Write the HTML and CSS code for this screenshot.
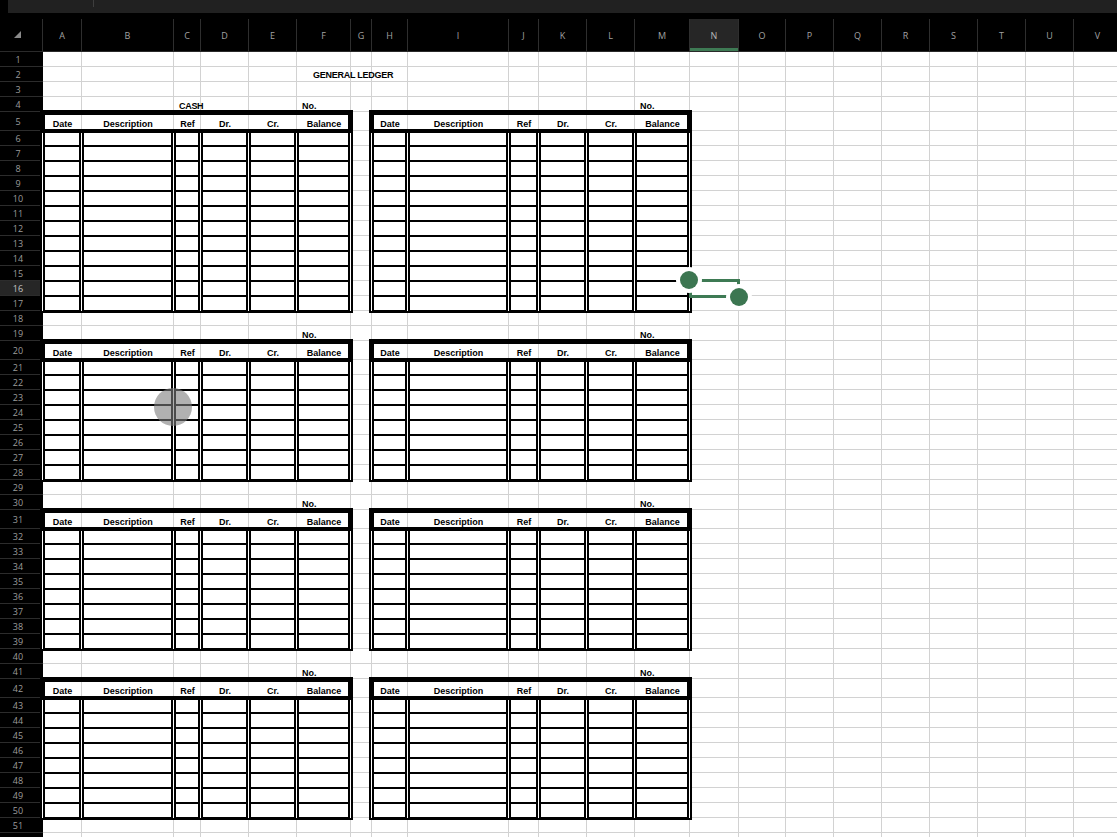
FILE: index.html
```html
<!DOCTYPE html>
<html>
<head>
<meta charset="utf-8">
<title>General Ledger</title>
<link rel="stylesheet" href="styles.css">
</head>
<body>
<div class="app">
  <div class="topbar"><div class="tb-left"></div><div class="tb-main"><span class="tb-div"></span></div></div>
  <div class="sheet">
    <div class="corner"><svg width="7" height="7" viewBox="0 0 7 7"><polygon points="7,0 7,7 0,7" fill="#8a8a8a"/></svg></div>
    <div class="colheads">
      <div class="ch">A</div><div class="ch">B</div><div class="ch">C</div><div class="ch">D</div><div class="ch">E</div><div class="ch">F</div><div class="ch">G</div><div class="ch">H</div><div class="ch">I</div><div class="ch">J</div><div class="ch">K</div><div class="ch">L</div><div class="ch">M</div><div class="ch on">N</div><div class="ch">O</div><div class="ch">P</div><div class="ch">Q</div><div class="ch">R</div><div class="ch">S</div><div class="ch">T</div><div class="ch">U</div><div class="ch">V</div>
    </div>
    <div class="rowheads">
      <div class="rh">1</div><div class="rh">2</div><div class="rh">3</div><div class="rh">4</div><div class="rh">5</div><div class="rh">6</div><div class="rh">7</div><div class="rh">8</div><div class="rh">9</div><div class="rh">10</div>
      <div class="rh">11</div><div class="rh">12</div><div class="rh">13</div><div class="rh">14</div><div class="rh">15</div><div class="rh on">16</div><div class="rh">17</div><div class="rh">18</div><div class="rh">19</div><div class="rh">20</div>
      <div class="rh">21</div><div class="rh">22</div><div class="rh">23</div><div class="rh">24</div><div class="rh">25</div><div class="rh">26</div><div class="rh">27</div><div class="rh">28</div><div class="rh">29</div><div class="rh">30</div>
      <div class="rh">31</div><div class="rh">32</div><div class="rh">33</div><div class="rh">34</div><div class="rh">35</div><div class="rh">36</div><div class="rh">37</div><div class="rh">38</div><div class="rh">39</div><div class="rh">40</div>
      <div class="rh">41</div><div class="rh">42</div><div class="rh">43</div><div class="rh">44</div><div class="rh">45</div><div class="rh">46</div><div class="rh">47</div><div class="rh">48</div><div class="rh">49</div><div class="rh">50</div>
      <div class="rh">51</div><div class="rh"></div>
    </div>
    <div class="vlines"><i></i><i></i><i></i><i></i><i></i><i></i><i></i><i></i><i></i><i></i><i></i><i></i><i></i><i></i><i></i><i></i><i></i><i></i><i></i><i></i><i></i><i></i></div>
    <div class="hlines">
      <i></i><i></i><i></i><i></i><i></i><i></i><i></i><i></i><i></i><i></i><i></i><i></i><i></i>
      <i></i><i></i><i></i><i></i><i></i><i></i><i></i><i></i><i></i><i></i><i></i><i></i><i></i>
      <i></i><i></i><i></i><i></i><i></i><i></i><i></i><i></i><i></i><i></i><i></i><i></i><i></i>
      <i></i><i></i><i></i><i></i><i></i><i></i><i></i><i></i><i></i><i></i><i></i><i></i><i></i>
    </div>

    <div class="lbl title">GENERAL LEDGER</div>
    <div class="lbl cash">CASH</div>
    <div class="lbl no colF row4">No.</div>
    <div class="lbl no colM row4">No.</div>
    <div class="lbl no colF row19">No.</div>
    <div class="lbl no colM row19">No.</div>
    <div class="lbl no colF row30">No.</div>
    <div class="lbl no colM row30">No.</div>
    <div class="lbl no colF row41">No.</div>
    <div class="lbl no colM row41">No.</div>

    <div class="ledger left band1">
      <div class="lh"><div class="lh-g"><span>Date</span><span>Description</span><span>Ref</span><span>Dr.</span><span>Cr.</span><span>Balance</span></div></div>
      <div class="lb"><i></i><i></i><i></i><i></i><i></i><i></i></div>
    </div>
    <div class="ledger right band1">
      <div class="lh"><div class="lh-g"><span>Date</span><span>Description</span><span>Ref</span><span>Dr.</span><span>Cr.</span><span>Balance</span></div></div>
      <div class="lb"><i></i><i></i><i></i><i></i><i></i><i></i></div>
    </div>
    <div class="ledger left band2">
      <div class="lh"><div class="lh-g"><span>Date</span><span>Description</span><span>Ref</span><span>Dr.</span><span>Cr.</span><span>Balance</span></div></div>
      <div class="lb"><i></i><i></i><i></i><i></i><i></i><i></i></div>
    </div>
    <div class="ledger right band2">
      <div class="lh"><div class="lh-g"><span>Date</span><span>Description</span><span>Ref</span><span>Dr.</span><span>Cr.</span><span>Balance</span></div></div>
      <div class="lb"><i></i><i></i><i></i><i></i><i></i><i></i></div>
    </div>
    <div class="ledger left band3">
      <div class="lh"><div class="lh-g"><span>Date</span><span>Description</span><span>Ref</span><span>Dr.</span><span>Cr.</span><span>Balance</span></div></div>
      <div class="lb"><i></i><i></i><i></i><i></i><i></i><i></i></div>
    </div>
    <div class="ledger right band3">
      <div class="lh"><div class="lh-g"><span>Date</span><span>Description</span><span>Ref</span><span>Dr.</span><span>Cr.</span><span>Balance</span></div></div>
      <div class="lb"><i></i><i></i><i></i><i></i><i></i><i></i></div>
    </div>
    <div class="ledger left band4">
      <div class="lh"><div class="lh-g"><span>Date</span><span>Description</span><span>Ref</span><span>Dr.</span><span>Cr.</span><span>Balance</span></div></div>
      <div class="lb"><i></i><i></i><i></i><i></i><i></i><i></i></div>
    </div>
    <div class="ledger right band4">
      <div class="lh"><div class="lh-g"><span>Date</span><span>Description</span><span>Ref</span><span>Dr.</span><span>Cr.</span><span>Balance</span></div></div>
      <div class="lb"><i></i><i></i><i></i><i></i><i></i><i></i></div>
    </div>

    <div class="selbox"></div>
  </div>
  <div class="touch"></div>
</div>
</body>
</html>
```

FILE: styles.css
```css
* { box-sizing: border-box; margin: 0; padding: 0; }
html, body { width: 1117px; height: 837px; overflow: hidden; background: #000; }

.app {
  position: relative;
  width: 1117px;
  height: 837px;
  overflow: hidden;
  background: #000;
  font-family: "Liberation Sans", Arial, sans-serif;
}

/* top strip */
.topbar { height: 13px; display: flex; margin-bottom: 6px; }
.tb-left { width: 8px; background: #000; }
.tb-main { flex: 1; background: #212121; padding-left: 85px; }
.tb-div { display: block; width: 1px; height: 7px; background: #3e3e3e; }

/* sheet grid */
.sheet {
  --cols: 39px 92px 27px 48px 48px 54px 21px 36px 101px 30px 48px 48px 55px 49px 47px 48px 48px 48px 48px 48px 48px 48px;
  --rows: repeat(4, 15px) 19px repeat(14, 15px) 19px repeat(10, 15px) 19px repeat(10, 15px) 19px repeat(10, 15px);
  position: relative;
  display: grid;
  grid-template-columns: 43px var(--cols);
  grid-template-rows: 33px var(--rows);
}

.corner {
  grid-column: 1;
  grid-row: 1;
  border-right: 1px solid #2e2e2e;
  border-bottom: 1px solid #2a2a2a;
  padding: 12px 0 0 14px;
}
.corner svg { display: block; }

.colheads {
  grid-column: 2 / -1;
  grid-row: 1;
  display: grid;
  grid-template-columns: var(--cols);
  border-bottom: 1px solid #2a2a2a;
}
.ch {
  border-right: 1px solid #2e2e2e;
  color: #a2a2a2;
  font-family: "Open Sans", "Noto Sans", sans-serif;
  font-size: 9px;
  display: flex;
  align-items: center;
  justify-content: center;
  padding-top: 1px;
}
.ch.on {
  background: #262626;
  box-shadow: inset 0 -3px 0 #3e7a54;
  color: #b5b5b5;
}

.rowheads {
  grid-column: 1;
  grid-row: 2 / -1;
  display: grid;
  grid-template-rows: var(--rows);
}
.rh {
  border-bottom: 1px solid #2c2c2c;
  color: #9c9c9c;
  font-family: "Open Sans", "Noto Sans", sans-serif;
  font-size: 9px;
  display: flex;
  align-items: center;
  justify-content: center;
  padding-right: 7px;
}
.rh.on {
  background: #262626;
  color: #c4c4c4;
  box-shadow: inset -3px 0 0 #3e7a54;
}

.vlines {
  grid-column: 2 / -1;
  grid-row: 2 / -1;
  display: grid;
  grid-template-columns: var(--cols);
  background: #fff;
}
.vlines i { display: block; border-right: 1px solid #d2d2d2; }

.hlines {
  grid-column: 2 / -1;
  grid-row: 2 / -1;
  display: grid;
  grid-template-rows: var(--rows);
}
.hlines i { display: block; border-bottom: 1px solid #d2d2d2; }

/* text labels in cells */
.lbl {
  display: flex;
  align-items: flex-end;
  white-space: nowrap;
  font-size: 9px;
  line-height: 9px;
  font-weight: bold;
  color: #000;
  padding-bottom: 1px;
}
.title { grid-column: 7 / 10; grid-row: 3; padding-left: 16px; padding-bottom: 2px; letter-spacing: -0.25px; }
.cash { grid-column: 4; grid-row: 5; padding-left: 5px; letter-spacing: -0.3px; }
.no { padding-left: 5px; }
.colF { grid-column: 7; }
.colM { grid-column: 14; }
.row4 { grid-row: 5; }
.row19 { grid-row: 20; }
.row30 { grid-row: 31; }
.row41 { grid-row: 42; }

/* ledger blocks */
.ledger {
  display: grid;
  grid-template-rows: 23px 1fr;
  margin: -2px -2px -2px -3px;
}
.left { grid-column: 2 / 8; }
.right { grid-column: 9 / 15; }
.band1 { grid-row: 6 / 19; }
.band2 { grid-row: 21 / 30; }
.band3 { grid-row: 32 / 41; }
.band4 { grid-row: 43 / 52; }

.left .lh-g, .left .lb { grid-template-columns: 39px 92px 27px 48px 48px 54px; }
.right .lh-g, .right .lb { grid-template-columns: 36px 101px 30px 48px 48px 55px; }

.lh {
  position: relative;
  z-index: 1;
  display: grid;
  border: 5px solid #000;
  border-bottom-width: 4px;
}
.lh-g {
  display: grid;
  margin: 0 -3px 0 -2px;
  align-items: end;
  text-align: center;
  font-size: 9px;
  line-height: 9px;
  font-weight: bold;
  color: #000;
}
.lb {
  display: grid;
  margin-top: -2px;
  border: 2px solid #000;
  border-top: 0;
  padding-left: 1px;
  background: #fff;
}
.lb i {
  display: block;
  margin-right: 1px;
  border-left: 2px solid #000;
  border-right: 2px solid #000;
  background: repeating-linear-gradient(to bottom, #000 0 1px, #fff 1px 14px, #000 14px 15px);
}

/* selected cell N16 with touch handles */
.selbox {
  grid-column: 15;
  grid-row: 17;
  position: relative;
  z-index: 3;
  margin: -2px -1px -2px -1px;
  border: 3px solid #3e7a54;
}
.selbox::before,
.selbox::after {
  content: "";
  position: absolute;
  width: 18px;
  height: 18px;
  border-radius: 50%;
  background: #3c7651;
  box-shadow: 0 0 0 4px #fff;
}
.selbox::before { left: -12px; top: -11px; }
.selbox::after { left: 38px; top: 6px; }

.touch {
  position: absolute;
  left: 154px;
  top: 388px;
  width: 38px;
  height: 38px;
  border-radius: 50%;
  background: rgba(125, 125, 125, 0.6);
  z-index: 4;
}
```
